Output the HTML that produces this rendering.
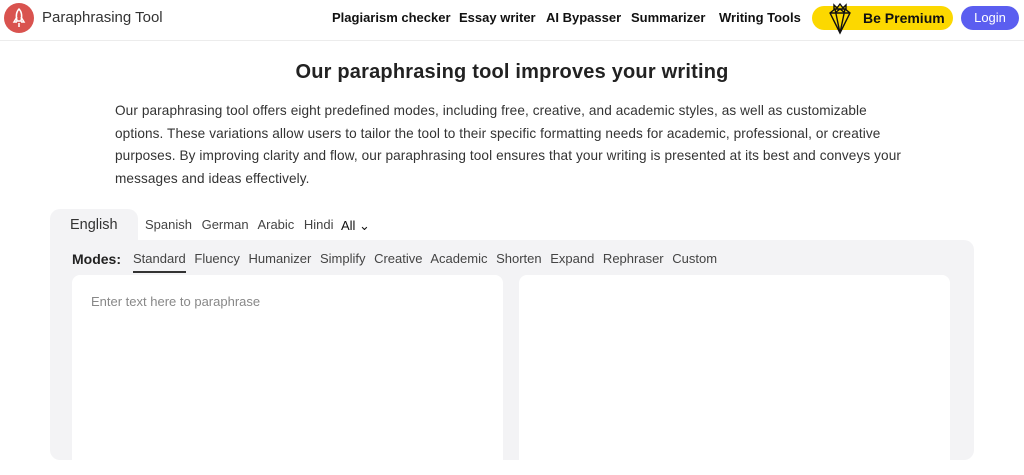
<!DOCTYPE html>
<html><head><style>
*{margin:0;padding:0;box-sizing:border-box}
body{width:1024px;height:448px;overflow:hidden;background:#fff;font-family:"Liberation Sans",sans-serif;color:#222;position:relative}
.a{position:absolute;white-space:nowrap}
.nav{font-size:13px;font-weight:bold;color:#111;top:10px}
</style></head><body>
<div class="a" style="left:0;top:40px;width:1024px;height:1px;background:#ececec"></div>
<div class="a" style="left:4px;top:3px;width:30px;height:30px;border-radius:50%;background:#d9534f"></div>
<svg class="a" style="left:4px;top:3px" width="30" height="30" viewBox="0 0 30 30"><path d="M15 6c-3 3-3 8-2 12h4c1-4 1-9-2-12zM13 14l-3 5h3M17 14l3 5h-3M15 20v4" fill="none" stroke="#fff" stroke-width="1.5"/></svg>
<div class="a" style="left:42px;top:9px;font-size:15px;color:#333">Paraphrasing Tool</div>
<div class="a nav" style="left:332px">Plagiarism checker</div>
<div class="a nav" style="left:459px">Essay writer</div>
<div class="a nav" style="left:546px">AI Bypasser</div>
<div class="a nav" style="left:631px">Summarizer</div>
<div class="a nav" style="left:719px">Writing Tools</div>
<div class="a" style="left:812px;top:6px;width:141px;height:24px;border-radius:12px;background:#fcd800"></div>
<svg class="a" style="left:822px;top:1px" width="36" height="34" viewBox="0 0 36 34"><path d="M12 4l3 3 3-4 3 4 3-3v4H12zM8 12l5-4h10l5 4-10 20zM8 12h20M13 8l5 24M23 8l-5 24M13 12l5-4 5 4" fill="none" stroke="#111" stroke-width="1.4"/></svg>
<div class="a" style="left:863px;top:10px;font-size:14px;font-weight:bold;color:#111">Be Premium</div>
<div class="a" style="left:961px;top:6px;width:58px;height:24px;border-radius:12px;background:#5b5ef0;color:#fff;font-size:13px;text-align:center;line-height:24px">Login</div>
<div class="a" style="left:0;width:1024px;top:61px;text-align:center;font-size:20px;letter-spacing:0.2px;font-weight:bold;color:#222">Our paraphrasing tool improves your writing</div>
<div class="a" style="left:115px;top:100px;font-size:13.6px;letter-spacing:0.1px;line-height:22.5px;color:#333">Our paraphrasing tool offers eight predefined modes, including free, creative, and academic styles, as well as customizable<br>options. These variations allow users to tailor the tool to their specific formatting needs for academic, professional, or creative<br>purposes. By improving clarity and flow, our paraphrasing tool ensures that your writing is presented at its best and conveys your<br>messages and ideas effectively.</div>
<div class="a" style="left:50px;top:209px;width:88px;height:40px;border-radius:10px 10px 0 0;background:#f3f3f5"></div>
<div class="a" style="left:50px;top:240px;width:924px;height:220px;border-radius:10px;background:#f3f3f5"></div>
<div class="a" style="left:70px;top:217px;font-size:14.5px;color:#333">English</div>
<div class="a" style="left:145px;top:217px;font-size:13px;color:#444;word-spacing:6px">Spanish German Arabic Hindi</div>
<div class="a" style="left:341px;top:218px;font-size:13px;color:#111">All ⌄</div>
<div class="a" style="left:72px;top:251px;font-size:14px;font-weight:bold;color:#222">Modes:</div>
<div class="a" style="left:133px;top:251px;font-size:13px;color:#444;word-spacing:5px">Standard Fluency Humanizer Simplify Creative Academic Shorten Expand Rephraser Custom</div>
<div class="a" style="left:133px;top:271px;width:53px;height:2px;background:#333"></div>
<div class="a" style="left:72px;top:275px;width:431px;height:200px;border-radius:8px;background:#fff"></div>
<div class="a" style="left:519px;top:275px;width:431px;height:200px;border-radius:8px;background:#fff"></div>
<div class="a" style="left:91px;top:294px;font-size:13px;color:#888">Enter text here to paraphrase</div>
</body></html>
